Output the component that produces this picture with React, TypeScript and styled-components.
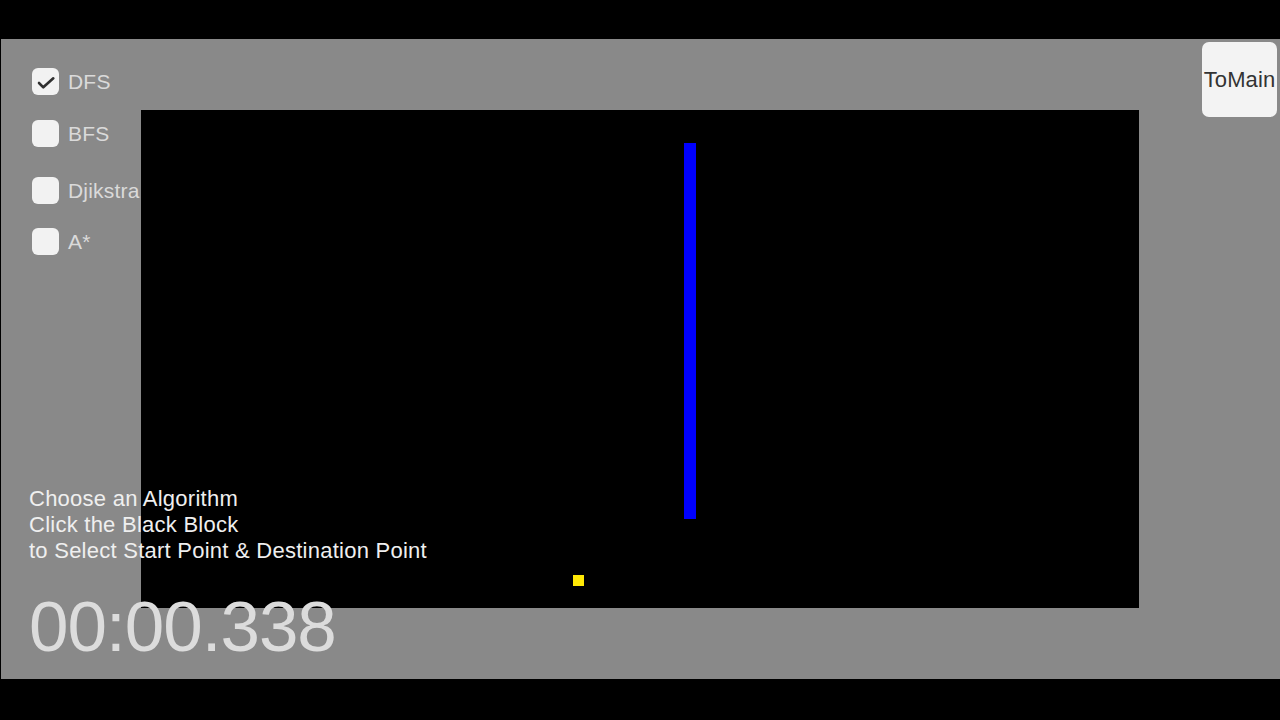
import React from "react";
import styled, { createGlobalStyle } from "styled-components";

const Global = createGlobalStyle`
  html, body { margin: 0; padding: 0; background: #000; }
  body { font-family: "Liberation Sans", Arial, sans-serif; }
  #root { width: 1280px; height: 720px; }
`;

const Screen = styled.div`
  width: 1280px;
  height: 720px;
  background: #000;
  display: flex;
  flex-direction: column;
  overflow: hidden;
`;

const Letterbox = styled.div<{ $h: number }>`
  height: ${(p) => p.$h}px;
  flex: none;
  background: #000;
`;

const Stage = styled.main`
  flex: none;
  height: 640px;
  margin-left: 1px;
  background: #898989;
  display: grid;
  grid-template-columns: 140px 998px 1fr;
  grid-template-rows: 71px 498px 1fr;
  overflow: hidden;
`;

const Board = styled.div`
  grid-column: 2;
  grid-row: 2;
  z-index: 1;
  background: #000;
  position: relative;
`;

const Cell = styled.div<{ $x: number; $y: number; $w: number; $h: number; $c: string }>`
  position: absolute;
  left: ${(p) => p.$x}px;
  top: ${(p) => p.$y}px;
  width: ${(p) => p.$w}px;
  height: ${(p) => p.$h}px;
  background: ${(p) => p.$c};
`;

const Options = styled.div`
  grid-column: 1 / 3;
  grid-row: 1 / 3;
  z-index: 0;
  align-self: start;
  justify-self: start;
  display: flex;
  flex-direction: column;
  padding-left: 31px;
`;

const OptionRow = styled.label<{ $gap: number }>`
  display: flex;
  align-items: center;
  gap: 9px;
  height: 27px;
  margin-top: ${(p) => p.$gap}px;
  white-space: nowrap;
`;

const Box = styled.span`
  width: 27px;
  height: 27px;
  box-sizing: border-box;
  border-radius: 6px;
  background: #f2f2f2;
  display: flex;
  flex: none;
`;

const OptionLabel = styled.span`
  font-size: 21px;
  color: #dadada;
  letter-spacing: 0.2px;
`;

const ToMainButton = styled.button`
  grid-column: 3;
  grid-row: 1 / 3;
  align-self: start;
  justify-self: end;
  margin: 3px 3px 0 0;
  width: 75px;
  height: 75px;
  border: none;
  border-radius: 7px;
  background: #f3f3f3;
  color: #333;
  font-family: "Liberation Sans", Arial, sans-serif;
  font-size: 22px;
  letter-spacing: 0.1px;
  padding: 0;
  display: flex;
  align-items: center;
  justify-content: center;
  white-space: nowrap;
  overflow: visible;
`;

const Info = styled.div`
  grid-column: 1 / 4;
  grid-row: 2 / 4;
  align-self: end;
  z-index: 2;
  padding: 0 0 16px 28px;
  display: flex;
  flex-direction: column;
  pointer-events: none;
`;

const Instructions = styled.p`
  margin: 0 0 27px 0;
  font-size: 22px;
  line-height: 26px;
  color: #efefef;
  letter-spacing: 0.25px;
`;

const Timer = styled.div`
  font-size: 71px;
  line-height: 72px;
  color: #dcdcdc;
  letter-spacing: -1px;
`;

const Check = () => (
  <svg width="27" height="27" viewBox="0 0 27 27" fill="none">
    <polyline
      points="7,15 11.3,19.3 21.3,10.3"
      stroke="#303030"
      strokeWidth="2.6"
      strokeLinecap="round"
      strokeLinejoin="round"
    />
  </svg>
);

const algorithms = [
  { name: "DFS", checked: true, gap: 29 },
  { name: "BFS", checked: false, gap: 25 },
  { name: "Djikstra", checked: false, gap: 30 },
  { name: "A*", checked: false, gap: 24 },
];

export default function App() {
  return (
    <Screen>
      <Global />
      <Letterbox $h={39} />
      <Stage>
        <Options>
          {algorithms.map((a) => (
            <OptionRow key={a.name} $gap={a.gap}>
              <Box>{a.checked && <Check />}</Box>
              <OptionLabel>{a.name}</OptionLabel>
            </OptionRow>
          ))}
        </Options>
        <Board>
          <Cell $x={543} $y={33} $w={12} $h={376} $c="#0000ff" />
          <Cell $x={432} $y={465} $w={11} $h={11} $c="#ffe805" />
        </Board>
        <ToMainButton>ToMain</ToMainButton>
        <Info>
          <Instructions>
            Choose an Algorithm
            <br />
            Click the Black Block
            <br />
            to Select Start Point &amp; Destination Point
          </Instructions>
          <Timer>00:00.338</Timer>
        </Info>
      </Stage>
      <Letterbox $h={41} />
    </Screen>
  );
}
